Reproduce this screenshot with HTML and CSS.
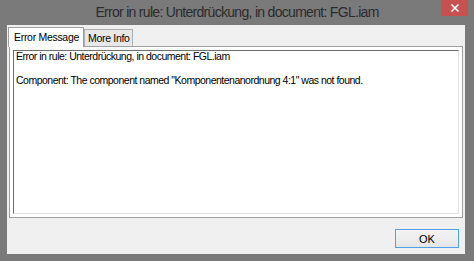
FILE: index.html
```html
<!DOCTYPE html>
<html>
<head>
<meta charset="utf-8">
<link rel="stylesheet" href="styles.css">
</head>
<body>
<div class="window">
  <div class="titlebar">
    <div class="title">Error in rule: Unterdrückung, in document: FGL.iam</div>
    <div class="close">
      <svg width="10" height="10" viewBox="0 0 10 10"><path d="M1.5 1.5 L8.5 8.5 M8.5 1.5 L1.5 8.5" stroke="#fff" stroke-width="1.6"/></svg>
    </div>
  </div>
  <div class="client">
    <div class="tabs">
      <div class="tab active">Error Message</div>
      <div class="tab">More Info</div>
    </div>
    <div class="panel">
      <div class="textbox">
        <p>Error in rule: Unterdrückung, in document: FGL.iam</p>
        <p class="gap">Component: The component named "Komponentenanordnung 4:1" was not found.</p>
      </div>
    </div>
    <div class="footer">
      <button class="ok">OK</button>
    </div>
  </div>
</div>
</body>
</html>
```
FILE: styles.css
```css
html, body {
  margin: 0;
  padding: 0;
  width: 474px;
  height: 261px;
  overflow: hidden;
  background: #7a7a7a;
}
.window {
  width: 474px;
  height: 261px;
  display: flex;
  flex-direction: column;
  background: #7a7a7a;
}
.titlebar {
  height: 25px;
  position: relative;
  display: flex;
  justify-content: center;
  align-items: center;
}
.title {
  font-family: "Liberation Sans", Arial, sans-serif;
  font-size: 14px;
  letter-spacing: -0.7px;
  color: #2b2b2b;
  margin-top: -1px;
}
.close {
  position: absolute;
  right: 6px;
  top: 0;
  width: 27px;
  height: 16px;
  background: #c75050;
  display: flex;
  align-items: center;
  justify-content: center;
}
.client {
  margin: 0 9px 7px 7px;
  flex: 1;
  background: #f0f0f0;
  display: flex;
  flex-direction: column;
  padding: 2px 2px 0 1px;
}
.tabs {
  display: flex;
  align-items: flex-end;
  height: 19px;
  position: relative;
  z-index: 1;
}
.tab {
  font-family: "Liberation Sans", Arial, sans-serif;
  font-size: 10.5px;
  letter-spacing: -0.3px;
  color: #000;
  border: 1px solid #adadad;
  border-bottom: none;
  background: #e8e8e8;
  padding: 0 2px 0 3px;
  height: 16px;
  line-height: 16px;
}
.tab.active {
  background: #fff;
  height: 19px;
  line-height: 18px;
  padding: 0 4px 0 5px;
  margin-bottom: -1px;
  border-color: #a0a0a0;
}
.panel {
  background: #fff;
  border: 1px solid #a0a0a0;
  height: 172px;
  padding: 3px;
  box-sizing: border-box;
  margin-left: 1px;
}
.textbox {
  height: 100%;
  box-sizing: border-box;
  border-top: 1px solid #6d6d6d;
  border-left: 1px solid #6d6d6d;
  border-right: 1px solid #e3e3e3;
  border-bottom: 1px solid #e3e3e3;
  padding: 0 2px;
  font-family: "Liberation Sans", Arial, sans-serif;
  font-size: 10.5px;
  letter-spacing: -0.5px;
  color: #000;
}
.textbox p {
  margin: 0;
  line-height: 11px;
}
.textbox p.gap {
  margin-top: 13px;
}
.footer {
  flex: 1;
  display: flex;
  justify-content: flex-end;
  align-items: center;
  padding-right: 4px;
}
.ok {
  width: 64px;
  height: 19px;
  border: 1px solid #4fa0e8;
  border-radius: 0;
  background: linear-gradient(#f3f3f3, #e6e6e6);
  font-family: "Liberation Sans", Arial, sans-serif;
  font-size: 11px;
  color: #000;
  padding: 0;
  margin-top: 5px;
}
```
